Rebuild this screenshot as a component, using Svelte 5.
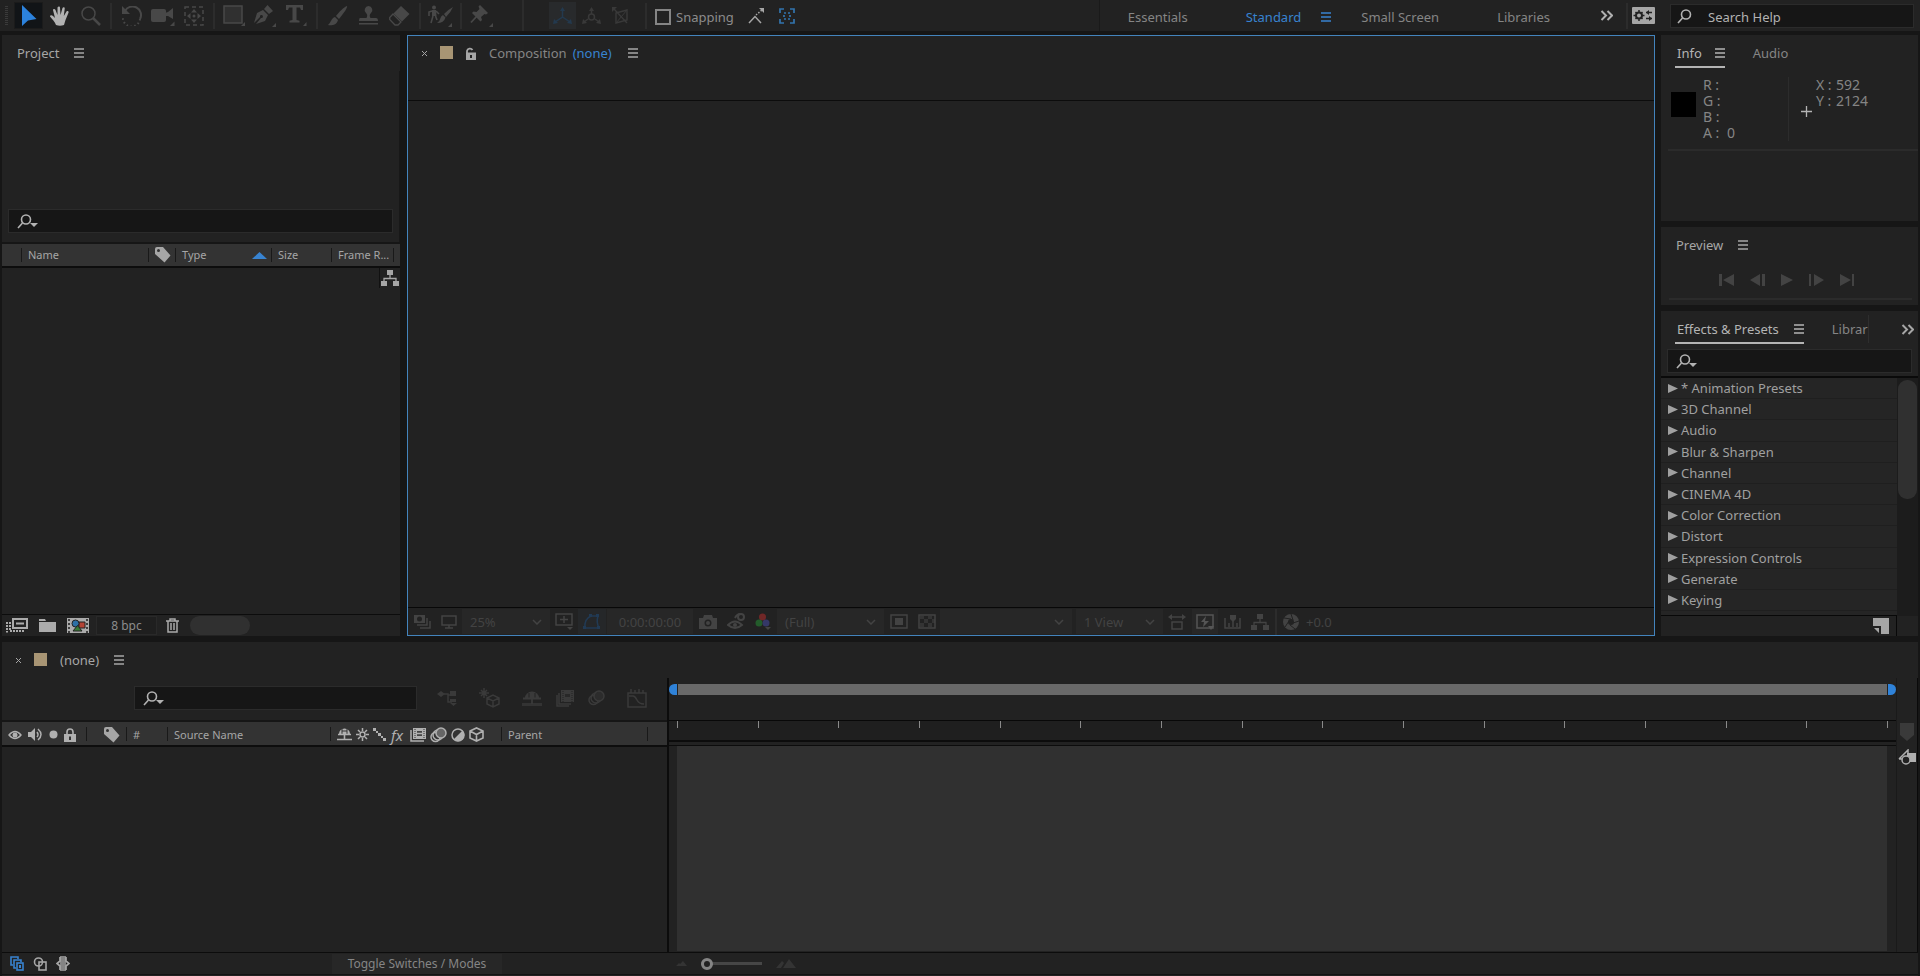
<script lang="ts">
	type Icon = [width: number, height: number, body: string];

	const line = 'fill="none" stroke="currentColor"';

	const icons: Record<string, Icon> = {
		select: [16, 22, `<path d="M1 0V21L7 15.500L15.500 14z"/>`],
		hand: [20, 20, `<path d="M6 19C5 16 2 13 0 10.500C0 9 2 9 3 10L5 12L3 4C3 2.500 5 2.500 5.500 4L7.500 9L7.500 1.500C8 0 10 0 10 1.500L10.500 9L12.500 2C13 1 15 1 14.700 2.800L13.800 10L16.500 5.500C17.500 4.500 19 5.500 18.500 6.800L15.500 14L14 19Q10 20.500 6 19z"/>`],
		zoom: [20, 20, `<g ${line}><circle cx="7.500" cy="7.500" r="6.500" stroke-width="1.500"/><path d="M12 12L19 19" stroke-width="2.500"/></g>`],
		rotate: [20, 20, `<g ${line} stroke-width="2"><path d="M3 5A8.500 8.500 0 0 1 18 13"/><path d="M18 13A8.500 8.500 0 0 1 1 11" stroke-dasharray="1.500 2.500"/></g><path d="M0 0V8H8z"/>`],
		camera: [24, 20, `<rect y="3" width="15" height="13" rx="2"/><path d="M14 7L17 6L22 2V13L17 10H14z"/><path d="M23.500 15.500V20H19z"/>`],
		anchor: [20, 20, `<rect x="1" y="1" width="18" height="18" ${line} stroke-width="1.500" stroke-dasharray="4 3"/><path d="M10 3L13 6.500H7zM10 17L7 13.500H13zM3 10L6.500 7V13zM17 10L13.500 13V7z"/><circle cx="10" cy="10" r="1.500"/>`],
		rect: [23, 21, `<rect x="1" y="1" width="18" height="17" fill="#303030" stroke="currentColor" stroke-width="1.500"/><path d="M22 17V21H18z"/>`],
		pen: [23, 22, `<path d="M0 18L3 8L9 5L14 10L11 16L2 19L7 13A1.500 1.500 0 1 0 6 12z"/><path d="M10 4L13.500 0L19 6L15 9z"/><path d="M22 18V22H18z"/>`],
		type: [21, 21, `<path d="M0 0H17V5H15L14 2.500H10.500V15L13.500 15.800V17.500H3.500V15.800L6.500 15V2.500H3L2 5H0z"/><path d="M20.500 17V21H17z"/>`],
		brush: [20, 20, `<path d="M8 10C11 6 16 1 19 0C20 1 16 7 11 13zM7 11L10 14C9 19 3 20 0 19C3 17 3 12 7 11z"/>`],
		stamp: [21, 19, `<path d="M10.500 0A4 4 0 0 0 8 7C10 9 9 11 8.500 12H2Q1 12 1 15H20Q20 12 18 12H12.500C12 11 11 9 13 7A4 4 0 0 0 10.500 0zM1 17H20V18.500H1z"/>`],
		eraser: [21, 20, `<path d="M12 0L20.500 8L13 15.500L4.500 7.500z"/><path d="M4 8L12 16L9 19H6L0.700 13.500V11.500z" ${line} stroke-width="1.300"/>`],
		roto: [25, 22, `<circle cx="6" cy="2.500" r="2"/><path d="M4 5H8L8.500 11H4z"/><path d="M4 6L1 7V11M8 6L11 9M5 11L3 18M7.500 11L9 15" ${line} stroke-width="1.600"/><path d="M16 9Q21 4 25 2Q23 7 18 12zM15 10L17.500 12.500Q16 18 9 18Q12 16 12.500 13Q13 11 15 10zM24 18V22H20z"/>`],
		pin: [24, 22, `<path d="M10 0L18 8L16 9.500L14.500 9L11 12L12 15L10.500 16.500L2 8L3.500 6.500L6.500 7L9.500 4L8.500 1.500z"/><path d="M7 11L1 17.500" ${line} stroke-width="1.800"/><path d="M23 18V22H19z"/>`],
		axis: [19, 18, `<path d="M9.500 2V10L2 15M9.500 10L17 15" ${line} stroke-width="1.500"/><path d="M9.500 0L12 4H7zM0 17L1 12L5 16zM19 17L18 12L14 16z"/>`],
		worldAxis: [19, 18, `<g ${line} stroke-width="1.500"><path d="M9.500 2V7M6 12L2 15M13 12L17 15"/><circle cx="9.500" cy="10" r="3"/></g><path d="M9.500 0L12 4H7zM0 17L1 12L5 16zM19 17L18 12L14 16z"/>`],
		viewAxis: [18, 18, `<path d="M2 2L15 16M4 6L15 3V13L4 16z" ${line} stroke-width="1.400"/><path d="M4 16L15 3" ${line}/><path d="M0 0H5L0 5z"/>`],
		snapEdge: [17, 18, `<g ${line} stroke-width="1.500"><path d="M1 16L7 9.500L13 16"/><path d="M8 8L14 3" stroke-dasharray="1.500 1.500"/></g><path d="M11 1H16V6z"/>`],
		snapBox: [16, 16, `<g ${line} stroke-width="1.700"><path d="M1 5V1H5M11 1H15V5M15 11V15H11M5 15H1V11"/><rect x="5" y="5" width="6" height="6" stroke-dasharray="2 2"/></g>`],
		settings: [23, 17, `<rect width="23" height="17" rx="1"/><circle cx="7" cy="8.500" r="3" fill="none" stroke="#222" stroke-width="2"/><path d="M7 3V5M7 12V14M1.500 8.500H4M10 8.500H12.500M3.500 5L5 6.500M10.500 5L9 6.500M3.500 12L5 10.500M10.500 12L9 10.500M14 5.500H20M14 11.500H20" stroke="#222" stroke-width="1.500"/><path d="M17 3V8L14 5.500zM17 9V14L20 11.500z" fill="#222"/>`],
		search: [15, 15, `<g ${line} stroke-width="1.600"><circle cx="9" cy="5.500" r="4.500"/><path d="M5.500 9L1 14"/></g>`],
		searchMenu: [21, 15, `<g ${line} stroke-width="1.600"><circle cx="9" cy="5.500" r="4.500"/><path d="M5.500 9L1 14"/></g><path d="M13 9H21L17 13z"/>`],
		more: [13, 11, `<path d="M1.500 1L6 5.500L1.500 10M7.500 1L12 5.500L7.500 10" ${line} stroke-width="2"/>`],
		burger: [10, 10, `<path d="M0 1H10M0 5H10M0 9H10" stroke="currentColor" stroke-width="1.400"/>`],
		close: [7, 7, `<path d="M1 1L6 6M6 1L1 6" ${line} stroke-width="1"/>`],
		unlock: [12, 13, `<path d="M2 6V4A3 3 0 0 1 7.500 3" ${line} stroke-width="1.800"/><path d="M1 5.500H11V13H1zM5 8V11H7V8z" fill-rule="evenodd"/>`],
		lock: [12, 14, `<path d="M3 7V4A3 3 0 0 1 9 4V7" ${line} stroke-width="1.600"/><path d="M0 6H12V14H0zM5 8.500V12H7V8.500z" fill-rule="evenodd"/>`],
		tag: [16, 16, `<path d="M0 2Q0 0 2 0H8L15.500 8.500L9.500 15.500L0 7zM2 3.500A1.500 1.500 0 1 0 5 3.500A1.500 1.500 0 1 0 2 3.500z" fill-rule="evenodd"/>`],
		sort: [15, 7, `<path d="M0 7L7.500 0L15 7z"/>`],
		flowchart: [18, 16, `<path d="M6 0H12V5H6zM0 11H6V16H0zM12 11H18V16H12z"/><path d="M9 5V8M3 11V8.500H15V11" ${line} stroke-width="1.300"/>`],
		interpret: [22, 15, `<path d="M6 0H22V11H6zM8 2V9H20V2zM10 4.500H18V6.500H10z" fill-rule="evenodd"/><path d="M4 4V13H18M1 4V14.500" ${line} stroke-width="2" stroke-dasharray="2 1"/>`],
		folder: [17, 13, `<path d="M0 0H6L7 2H0zM0 3H17V13H0z"/>`],
		newComp: [22, 15, `<rect width="22" height="15"/><path d="M2 1V15M20 1V15" stroke="#252525" stroke-width="1.600" stroke-dasharray="2 2"/><path d="M12 4H18V10H12z" fill="#b44436" stroke="#222"/><circle cx="8.500" cy="5.500" r="3.500" fill="#2d70a5" stroke="#222"/><path d="M6 13L10.500 7.500L15 13z" fill="#397a35" stroke="#222"/>`],
		trash: [13, 15, `<g ${line} stroke-width="1.500"><path d="M0 3H13M4 3V1H9V3M2 3V14H11V3M5 5V12M8 5V12"/></g>`],
		renders: [17, 14, `<path d="M0 0H11V8H0zM3 4A2.500 2.500 0 0 0 8 4A2.500 2.500 0 0 0 3 4z" fill-rule="evenodd"/><path d="M3 10H13V3M6 13H16V6" ${line} stroke-width="1.500"/>`],
		monitor: [16, 14, `<path d="M1 1H15V10H1zM8 10V13M4 13H12" ${line} stroke-width="1.500"/>`],
		chevron: [10, 6, `<path d="M1 1L5 5L9 1" ${line} stroke-width="1.500"/>`],
		grid: [18, 18, `<path d="M1 1H17V12H1zM9 3V10M5 6.500H13" ${line} stroke-width="1.500"/><path d="M12 14H18L15 17z"/>`],
		mask: [18, 15, `<path d="M2 14Q1 5 8 2H15Q13 8 16 14z" ${line} stroke-width="1.500"/><path d="M0 12H3V15H0zM14 12H17V15H14zM6 0H9V3H6zM13 0H16V3H13z"/>`],
		photo: [18, 14, `<path d="M5 0H13L14 3H18V14H0V3H4zM5.500 8A3.500 3.500 0 0 0 12.500 8A3.500 3.500 0 0 0 5.500 8z" fill-rule="evenodd"/><circle cx="9" cy="8" r="2"/>`],
		showPhoto: [18, 17, `<g ${line} stroke-width="2"><path d="M1 12Q8 5 15 12Q8 18 1 12z"/><circle cx="14" cy="4" r="3"/><path d="M8 5Q10 1 13 1"/></g><circle cx="8" cy="12" r="2"/>`],
		channels: [16, 18, `<circle cx="7.500" cy="4" r="3.500" fill="#702727"/><circle cx="4" cy="10" r="3.500" fill="#235c2b"/><circle cx="11" cy="10" r="3.500" fill="#353868"/><path d="M10 14H16L13 17z"/>`],
		region: [18, 15, `<rect x="1" y="1" width="16" height="13" ${line} stroke-width="1.500"/><path d="M5 4H13V11H5z"/>`],
		checker: [18, 15, `<rect x="1" y="1" width="16" height="13" ${line} stroke-width="1.500"/><path d="M2 2H6V5H10V2H14V5H17V9H14V5H10V9H14V13H10V9H6V13H2V9H6V5H2z" opacity=".55"/>`],
		aspect: [18, 16, `<path d="M2 3H16M4 8H14V15H4z" ${line} stroke-width="1.500"/><path d="M0 3L4 0V6zM18 3L14 0V6z"/>`],
		fast: [18, 16, `<rect x="1" y="1" width="16" height="13" ${line} stroke-width="1.500"/><path d="M10 2L5 8H8L7 13L13 7H9zM12 12H18L15 16z"/>`],
		timeline: [17, 14, `<path d="M1 3V13H16V3M5 8V12M9 6V12M13 8V12" ${line} stroke-width="1.500"/><path d="M6 0H12V4L9 7L6 4z"/>`],
		exposure: [16, 16, `<circle cx="8" cy="8" r="5.500" ${line} stroke-width="5"/><path d="M8 0L10 6M16 7L10 9M12 15L7 11M2 13L6 7M1 4L8 5" stroke="#222"/>`],
		miniFlow: [20, 16, `<path d="M4 4H11V12H15M11 5H15" ${line} stroke-width="1.500"/><path d="M0 4L4 1L8 4L4 7zM13 1H19V6H13zM13 9H19V12H13zM13 13H20L16.500 16z"/>`],
		draft: [21, 20, `<path d="M5 0V10M0 5H10M2 2L8 8M8 2L2 8M8 10L14 7L20 10V16L14 19L8 16zM8 10L14 13L20 10M14 13V19" ${line} stroke-width="1.500"/>`],
		shyAll: [20, 15, `<path d="M3 7A7 6.500 0 0 1 17 7z"/><path d="M7 2V7M13 2V7" stroke="#222"/><path d="M1 7.500H19M10 7V13" ${line} stroke-width="1.800"/><path d="M0 12H20V15H0z" opacity=".7"/>`],
		frames: [18, 17, `<path d="M5 0H18V12H5z"/><path d="M7 1V12M16 1V12" stroke="#222" stroke-dasharray="1 1"/><path d="M9 4H14V7H9z" fill="#282828"/><path d="M3 3V14H15M1 5V16H13" ${line} stroke-width="1.500"/>`],
		blur: [17, 16, `<g ${line} stroke-width="1.500"><circle cx="5.500" cy="10" r="4.500"/><circle cx="8" cy="8" r="5"/><circle cx="11" cy="6" r="5" fill="#666"/></g>`],
		blurAll: [17, 16, `<g ${line} stroke-width="1.500"><circle cx="5.500" cy="10" r="4.500"/><circle cx="8" cy="8" r="5"/><circle cx="11" cy="6" r="5" fill="#2c2c2c"/></g>`],
		graph: [20, 19, `<path d="M1 4H19V18H1zM4 0V4M8 1V4M12 0V4M16 1V4M2 7H6Q8 7 10 11Q12 15 17 15" ${line} stroke-width="1.500"/>`],
		eye: [14, 10, `<path d="M1 5Q7 -2 13 5Q7 12 1 5z" ${line} stroke-width="1.400"/><circle cx="7" cy="5" r="2.500"/>`],
		speaker: [15, 13, `<path d="M0 4H3L7 0V13L3 9H0z"/><path d="M9 4Q11 6.500 9 9M10 1Q16 6.500 10 12" ${line} stroke-width="1.500"/>`],
		dot: [9, 9, `<circle cx="4.500" cy="4.500" r="4"/>`],
		shy: [15, 14, `<path d="M2 6A5.500 5.500 0 0 1 13 6z"/><path d="M5 1V6M10 1V6M5 3H10" stroke="#333"/><path d="M1 6.500H14M7.500 6V11M0 11.500H5M10 11.500H15M5 11.500H10" ${line} stroke-width="1.600"/>`],
		sun: [13, 13, `<g ${line} stroke-width="1.500"><circle cx="6.500" cy="6.500" r="2.500"/><path d="M6.500 0V3M6.500 10V13M0 6.500H3M10 6.500H13M2 2L4 4M9 9L11 11M2 11L4 9M11 2L9 4"/></g>`],
		quality: [14, 14, `<path d="M0 0H3V3H0zM3 3H5V5H3zM5 5H8V8H5zM8 8H10V10H8zM10 10H13V13H10z"/>`],
		film: [16, 14, `<path d="M3 0H16V11H3z"/><path d="M5 1V11M14 1V11" stroke="#333" stroke-dasharray="1 1"/><path d="M7 3H12V8H7z" fill="#444"/><path d="M7 5.500H12M1 2V13H14" ${line} stroke-width="1.500"/>`],
		adjust: [14, 14, `<circle cx="7" cy="7" r="6" ${line} stroke-width="1.500"/><path d="M11.500 2.500A6.300 6.300 0 0 1 2.500 11.500z"/>`],
		cube: [15, 15, `<path d="M1 4L7.500 1L14 4V11L7.500 14L1 11zM1 4L7.500 7.500L14 4M7.500 7.500V14" ${line} stroke-width="1.600"/>`],
		first: [15, 12, `<path d="M0 0H3V12H0zM15 0V12L4 6z"/>`],
		stepBack: [15, 12, `<path d="M10 0V12L0 6zM12 0H15V12H12z"/>`],
		play: [12, 12, `<path d="M0 0L12 6L0 12z"/>`],
		stepForward: [15, 12, `<path d="M0 0H2V12H0zM5 0L15 6L5 12z"/>`],
		last: [15, 12, `<path d="M0 0L11 6L0 12zM12 0H14V12H12z"/>`],
		cross: [11, 11, `<path d="M5.500 0V11M0 5.500H11" ${line} stroke-width="1.300"/>`],
		disclose: [10, 9, `<path d="M0 0L10 4.500L0 9z"/>`],
		newSheet: [16, 16, `<path d="M0 0H16V16H8V8H0zM1 10H6V15z"/>`],
		marker: [14, 18, `<path d="M0 0H14V12L7 18L0 12z"/>`],
		compButton: [18, 16, `<path d="M9 4H18V13H9z"/><path d="M1 10L10 1V5M1 10H5" ${line} stroke-width="1.500"/><circle cx="8" cy="11" r="4" fill="#222" stroke="currentColor" stroke-width="1.500"/>`],
		layers: [15, 15, `<g ${line} stroke-width="1.600"><path d="M3 9H1V1H8V3M6 12H4V4H11V6"/><rect x="7" y="7" width="6" height="7"/></g><path d="M9 9H11V12H9z"/>`],
		modes: [15, 14, `<g ${line} stroke-width="1.600"><circle cx="5.500" cy="5" r="4"/><rect x="6" y="5" width="7" height="8"/></g>`],
		stretch: [14, 15, `<path d="M4 0H10V15H4z" opacity=".75"/><path d="M4 1V5L1 7.500L4 10V14M10 1V5L13 7.500L10 10V14" ${line} stroke-width="1.700"/>`],
		zoomOut: [11, 5, `<path d="M0 5L3 2L4 3L7 0L11 5z"/>`],
		zoomIn: [20, 9, `<path d="M0 9L6 2L8 4L5 9zM7 9L13 0L20 9z"/>`],
	};

	const toolGroups = [
		["select", "hand", "zoom"],
		["rotate", "camera", "anchor"],
		["rect", "pen", "type"],
		["brush", "stamp", "eraser"],
		["roto"],
		["pin"],
	];

	const presets = [
		"* Animation Presets",
		"3D Channel",
		"Audio",
		"Blur & Sharpen",
		"Channel",
		"CINEMA 4D",
		"Color Correction",
		"Distort",
		"Expression Controls",
		"Generate",
		"Keying",
	];

	const ticks = Array.from({ length: 16 }, (_, i) => i);

	let activeTool = $state("select");
	let snapping = $state(false);
	let timelineZoom = $state(0);
</script>

{#snippet icon(name: string)}
	{@const [width, height, body] = icons[name]}
	<svg class="icon" {width} {height} viewBox="0 0 {width} {height}" fill="currentColor" aria-hidden="true">
		{@html body}
	</svg>
{/snippet}

{#snippet iconButton(name: string)}
	<button class="icon-btn" aria-label={name}>{@render icon(name)}</button>
{/snippet}

{#snippet searchBox(label: string)}
	<label class="search">
		{@render icon("searchMenu")}
		<input type="text" aria-label={label} />
	</label>
{/snippet}

<div class="app">
	<header class="toolbar">
		<span class="grip"></span>
		{#each toolGroups as group, i}
			{#if i > 0}<span class="sep"></span>{/if}
			{#each group as tool}
				<button
					class="tool"
					class:active={activeTool === tool}
					class:bright={tool === "hand"}
					aria-label={tool}
					onclick={() => (activeTool = tool)}
				>{@render icon(tool)}</button>
			{/each}
		{/each}
		<span class="sep wide"></span>
		<div class="axes">
			<button class="tool axis-on" aria-label="Local axis">{@render icon("axis")}</button>
			<button class="tool faint" aria-label="World axis">{@render icon("worldAxis")}</button>
			<button class="tool faint" aria-label="View axis">{@render icon("viewAxis")}</button>
		</div>
		<span class="sep"></span>
		<label class="snapping">
			<input type="checkbox" bind:checked={snapping} />
			Snapping
		</label>
		<button class="icon-btn" aria-label="Snap to edges">{@render icon("snapEdge")}</button>
		<button class="icon-btn snap-box" aria-label="Snap to features">{@render icon("snapBox")}</button>

		<nav class="workspaces">
			<button>Essentials</button>
			<button class="current">Standard {@render icon("burger")}</button>
			<button>Small Screen</button>
			<button>Libraries</button>
		</nav>
		<button class="icon-btn more-spaces" aria-label="More workspaces">{@render icon("more")}</button>
		<span class="sep"></span>
		<button class="icon-btn" aria-label="Workspace settings">{@render icon("settings")}</button>
		<label class="search help">
			{@render icon("search")}
			<input type="text" placeholder="Search Help" aria-label="Search Help" />
		</label>
	</header>

	<main class="upper">
		<section class="panel project">
			<div class="tabs">
				<h2>Project</h2>
				{@render iconButton("burger")}
			</div>
			<div class="project-info"></div>
			<div class="project-search">{@render searchBox("Search project")}</div>
			<table class="columns">
				<colgroup>
					<col class="w-label" /><col class="w-name" /><col class="w-tag" /><col class="w-type" /><col class="w-size" /><col class="w-rate" /><col />
				</colgroup>
				<thead>
					<tr>
						<th></th>
						<th>Name</th>
						<th>{@render icon("tag")}</th>
						<th><span class="sorted">Type <span class="blue">{@render icon("sort")}</span></span></th>
						<th>Size</th>
						<th>Frame R...</th>
						<th></th>
					</tr>
				</thead>
			</table>
			<div class="project-items">
				<div class="flow-btn">{@render iconButton("flowchart")}</div>
			</div>
			<footer class="project-footer">
				{@render iconButton("interpret")}
				{@render iconButton("folder")}
				{@render iconButton("newComp")}
				<button class="bpc">8 bpc</button>
				{@render iconButton("trash")}
				<span class="h-thumb"></span>
			</footer>
		</section>

		<section class="panel composition">
			<div class="tabs comp-tabs">
				{@render iconButton("close")}
				<span class="swatch"></span>
				{@render iconButton("unlock")}
				<h2 class="dim">Composition <span class="blue">(none)</span></h2>
				{@render iconButton("burger")}
			</div>
			<div class="viewer"></div>
			<footer class="comp-footer">
				{@render iconButton("renders")}
				{@render iconButton("monitor")}
				<label class="select mag">
					<select aria-label="Magnification"><option>25%</option></select>
					{@render icon("chevron")}
				</label>
				{@render iconButton("grid")}
				<button class="icon-btn mask-btn" aria-label="Toggle mask">{@render icon("mask")}</button>
				<button class="timecode">0:00:00:00</button>
				{@render iconButton("photo")}
				{@render iconButton("showPhoto")}
				{@render iconButton("channels")}
				<label class="select resolution">
					<select aria-label="Resolution"><option>(Full)</option></select>
					{@render icon("chevron")}
				</label>
				{@render iconButton("region")}
				{@render iconButton("checker")}
				<label class="select camera">
					<select aria-label="3D view"><option></option></select>
					{@render icon("chevron")}
				</label>
				<label class="select views">
					<select aria-label="View layout"><option>1 View</option></select>
					{@render icon("chevron")}
				</label>
				{@render iconButton("aspect")}
				<button class="icon-btn fast-btn" aria-label="Fast previews">{@render icon("fast")}</button>
				{@render iconButton("timeline")}
				{@render iconButton("flowchart")}
				<span class="sep"></span>
				{@render iconButton("exposure")}
				<button class="exposure">+0.0</button>
			</footer>
		</section>

		<aside class="side">
			<section class="panel info">
				<div class="tabs">
					<h2 class="tab-on">Info {@render icon("burger")}</h2>
					<h2 class="dim">Audio</h2>
				</div>
				<div class="readout">
					<span class="colour"></span>
					<dl class="rgba">
						<dt>R :</dt><dd></dd>
						<dt>G :</dt><dd></dd>
						<dt>B :</dt><dd></dd>
						<dt>A :</dt><dd>0</dd>
					</dl>
					<span class="cursor">{@render icon("cross")}</span>
					<dl class="xy">
						<dt>X :</dt><dd>592</dd>
						<dt>Y :</dt><dd>2124</dd>
					</dl>
				</div>
			</section>

			<section class="panel preview">
				<div class="tabs">
					<h2>Preview</h2>
					{@render iconButton("burger")}
				</div>
				<div class="transport">
					{#each ["first", "stepBack", "play", "stepForward", "last"] as name}
						{@render iconButton(name)}
					{/each}
				</div>
			</section>

			<section class="panel effects">
				<div class="tabs">
					<h2 class="tab-on">Effects & Presets {@render icon("burger")}</h2>
					<h2 class="dim next-tab">Librar</h2>
					<button class="icon-btn more-tabs" aria-label="More panels">{@render icon("more")}</button>
				</div>
				<div class="effects-search">{@render searchBox("Search effects")}</div>
				<div class="effects-body">
					<ul class="presets">
						{#each presets as preset}
							<li><button>{@render icon("disclose")}{preset}</button></li>
						{/each}
					</ul>
					<div class="v-track"><span class="v-thumb"></span></div>
				</div>
				<footer class="effects-footer">{@render iconButton("newSheet")}</footer>
			</section>
		</aside>
	</main>

	<section class="panel timeline">
		<div class="tabs timeline-tabs">
			{@render iconButton("close")}
			<span class="swatch"></span>
			<h2>(none)</h2>
			{@render iconButton("burger")}
		</div>
		<div class="timeline-body">
			<div class="layers">
				<div class="layer-tools">
					{@render searchBox("Search layers")}
					{#each ["miniFlow", "draft", "shyAll", "frames", "blurAll", "graph"] as name}
						{@render iconButton(name)}
					{/each}
				</div>
				<table class="columns">
					<colgroup>
						<col class="w-av" /><col class="w-colour" /><col class="w-number" /><col class="w-source" /><col class="w-switches" /><col class="w-parent" /><col />
					</colgroup>
					<thead>
						<tr>
							<th>
								<span class="av">
									{#each ["eye", "speaker", "dot", "lock"] as name}{@render icon(name)}{/each}
								</span>
							</th>
							<th class="tag-cell">{@render icon("tag")}</th>
							<th>#</th>
							<th>Source Name</th>
							<th>
								<span class="switches">
									{#each ["shy", "sun", "quality"] as name}{@render icon(name)}{/each}
									<i>fx</i>
									{#each ["film", "blur", "adjust", "cube"] as name}{@render icon(name)}{/each}
								</span>
							</th>
							<th>Parent</th>
							<th></th>
						</tr>
					</thead>
				</table>
				<div class="layer-list"></div>
			</div>
			<div class="track">
				<div class="work-area">
					<span class="handle start"></span>
					<span class="work-bar"></span>
					<span class="handle end"></span>
				</div>
				<div class="ruler">
					{#each ticks as tick (tick)}<span class="tick"></span>{/each}
				</div>
				<div class="lanes"><div class="lane-area"></div></div>
			</div>
			<div class="track-side">
				<button class="icon-btn marker" aria-label="Marker">{@render icon("marker")}</button>
				{@render iconButton("compButton")}
			</div>
		</div>
		<footer class="timeline-footer">
			<div class="panes">
				<button class="icon-btn blue" aria-label="Layer switches">{@render icon("layers")}</button>
				{@render iconButton("modes")}
				{@render iconButton("stretch")}
			</div>
			<button class="toggle">Toggle Switches / Modes</button>
			<div class="zoom-control">
				{@render icon("zoomOut")}
				<input type="range" min="0" max="100" aria-label="Timeline zoom" bind:value={timelineZoom} />
				{@render icon("zoomIn")}
			</div>
		</footer>
	</section>
</div>

<style>
	:global(body) {
		margin: 0;
		background: #161616;
	}

	.app {
		display: flex;
		flex-direction: column;
		box-sizing: border-box;
		min-height: 100vh;
		background: #161616;
		color: #a6a6a6;
		font-family: "Noto Sans", sans-serif;
		font-size: 13px;
		line-height: 18px;
	}

	.app * {
		box-sizing: border-box;
	}

	button,
	input,
	select {
		margin: 0;
		padding: 0;
		border: none;
		background: transparent;
		color: inherit;
		font: inherit;
	}

	h2 {
		display: flex;
		align-items: center;
		margin: 0;
		font-size: 13px;
		font-weight: 400;
	}

	.icon {
		display: block;
		flex-shrink: 0;
	}

	.icon-btn {
		display: flex;
		align-items: center;
		justify-content: center;
		flex-shrink: 0;
	}

	.blue {
		color: #3883d0;
	}

	.dim {
		color: #858585;
	}

	.panel {
		display: flex;
		flex-direction: column;
		background: #222;
		min-width: 0;
	}

	.sep {
		width: 2px;
		height: 26px;
		margin: 0 4px;
		background: #2c2c2c;
		flex-shrink: 0;
	}

	/* toolbar */
	.toolbar {
		display: flex;
		align-items: center;
		height: 31px;
		margin-bottom: 4px;
		padding: 0 6px 0 5px;
		background: #222;
	}

	.grip {
		width: 3px;
		height: 20px;
		margin-right: 5px;
		background: repeating-linear-gradient(#3a3a3a 0 1px, transparent 1px 2px);
	}

	.tool {
		display: flex;
		align-items: center;
		justify-content: center;
		width: 29px;
		height: 27px;
		margin: 0 1px;
		color: #484848;
		flex-shrink: 0;
	}

	.tool.bright {
		color: #b2b2b2;
	}

	.tool.active {
		border: 1px solid #1b1b1b;
		background: #111417;
		color: #2c82dc;
	}

	.tool.faint {
		color: #393939;
	}

	.axis-on {
		background: #282a2c;
		color: #23394e;
	}

	.sep.wide {
		margin-left: 25px;
		height: 31px;
	}

	.axes {
		display: flex;
		margin: 0 6px 0 20px;
	}

	.axes .tool {
		width: 27px;
	}

	.snapping {
		display: flex;
		align-items: center;
		gap: 5px;
		margin: 0 14px 0 4px;
		padding-top: 2px;
		color: #8c8c8c;
	}

	.snapping input {
		appearance: none;
		width: 16px;
		height: 16px;
		border: 2px solid #858585;
	}

	.snapping input:checked {
		background: #3883d0;
	}

	.snap-box {
		margin-left: 14px;
		color: #3274ae;
	}

	.workspaces {
		display: flex;
		align-self: stretch;
		margin: 0 50px 0 auto;
		padding: 3px 0 0 28px;
		gap: 58px;
		border-left: 1px solid #1a1a1a;
		color: #858585;
	}

	.workspaces button {
		display: flex;
		align-items: center;
		gap: 20px;
	}

	.workspaces .current {
		color: #3883d0;
		margin-right: -28px;
	}

	.more-spaces {
		margin-right: 9px;
		color: #b0b0b0;
	}

	.search {
		display: flex;
		align-items: center;
		gap: 16px;
		height: 24px;
		padding: 0 8px;
		border: 1px solid #2b2b2b;
		background: #161616;
		color: #b2b2b2;
	}

	.search input {
		flex: 1;
		min-width: 0;
		outline: none;
	}

	.search input::placeholder {
		color: #b2b2b2;
		opacity: 1;
	}

	.help {
		width: 244px;
		margin-left: 15px;
		padding: 2px 6px 0;
	}

	/* upper row */
	.upper {
		display: grid;
		grid-template-columns: 398px minmax(0, 1fr) 257px;
		gap: 6px;
		flex: 1;
		padding: 0 2px;
	}

	.tabs {
		display: flex;
		align-items: center;
		height: 36px;
		padding-left: 15px;
		gap: 15px;
		flex-shrink: 0;
	}

	/* project */
	.project-info {
		height: 138px;
		border-right: 1px solid #181818;
	}

	.project-search {
		padding: 0 6px 9px;
		border-right: 1px solid #181818;
	}

	.columns {
		width: 100%;
		height: 26px;
		table-layout: fixed;
		border-collapse: collapse;
		border-top: 2px solid #161616;
		border-bottom: 2px solid #0d0d0d;
		background: #333;
		font-size: 11px;
		line-height: 14px;
	}

	.columns th {
		height: 22px;
		padding: 0 0 0 6px;
		background: linear-gradient(#191919, #191919) right center / 1px 14px no-repeat;
		font-weight: 400;
		text-align: left;
		white-space: nowrap;
	}

	.columns th:last-child {
		background: none;
	}

	.w-label { width: 20px; }
	.w-name { width: 127px; }
	.w-tag { width: 27px; }
	.w-type { width: 96px; }
	.w-size { width: 60px; }
	.w-rate { width: 62px; }

	.sorted {
		display: flex;
		align-items: center;
		justify-content: space-between;
		padding-right: 5px;
	}

	.project-items {
		display: flex;
		justify-content: flex-end;
		align-items: flex-start;
		flex: 1;
	}

	.flow-btn {
		padding: 2px 1px;
		border-left: 1px solid #111;
	}

	.project-footer {
		display: flex;
		align-items: center;
		height: 22px;
		padding-left: 4px;
		gap: 11px;
		border-top: 1px solid #0c0c0c;
		color: #ababab;
	}

	.bpc {
		width: 61px;
		height: 19px;
		margin: 0 -2px 0 -4px;
		border: 1px solid #292929;
		background: #1f1f1f;
		color: #8c8c8c;
		font-size: 12px;
		line-height: 16px;
	}

	.h-thumb {
		width: 60px;
		height: 19px;
		border-radius: 10px;
		background: #303030;
	}

	/* composition */
	.composition {
		margin-left: 1px;
		border: 1px solid #4384bd;
	}

	.comp-tabs {
		height: 34px;
		padding-left: 13px;
		gap: 12px;
	}

	.comp-tabs h2 {
		gap: 6px;
	}

	.comp-tabs h2 + .icon-btn {
		margin-left: 4px;
	}

	.swatch {
		width: 13px;
		height: 13px;
		margin-bottom: 2px;
		background: #a89574;
	}

	.viewer {
		flex: 1;
		margin-top: 30px;
		border-top: 1px solid #0c0c0c;
	}

	.comp-footer {
		display: flex;
		align-items: center;
		height: 28px;
		padding: 1px 6px;
		gap: 10px;
		border-top: 1px solid #080808;
		color: #434343;
		overflow: hidden;
	}

	.select {
		display: flex;
		align-items: center;
		height: 25px;
		padding: 0 8px;
		background: #272727;
	}

	.select select {
		appearance: none;
		flex: 1;
		min-width: 0;
		outline: none;
	}

	.mag {
		width: 88px;
		margin: 0 -5px;
	}

	.mask-btn {
		width: 28px;
		height: 25px;
		margin: 0 -5px;
		background: #252729;
		color: #213a54;
	}

	.timecode {
		width: 86px;
		height: 25px;
		margin: 0 -4px;
		background: #272727;
	}

	.resolution {
		width: 107px;
		margin: 0 -4px;
	}

	.camera {
		width: 132px;
		margin: 0 -6px;
	}

	.views {
		width: 87px;
		margin-right: -5px;
	}

	.fast-btn {
		width: 26px;
		height: 25px;
		margin: 0 -4px;
		background: #272727;
		color: #555;
	}

	.comp-footer .sep {
		margin: 0 -4px;
	}

	.exposure {
		margin-left: -3px;
	}

	/* right column */
	.side {
		display: flex;
		flex-direction: column;
		gap: 6px;
		min-width: 0;
	}

	.tab-on {
		gap: 13px;
		height: 28px;
		margin: 2px 0 0 -1px;
		padding: 0 0 0 2px;
		border-bottom: 2px solid #b4b4b4;
		color: #b4b4b4;
	}

	.info {
		height: 186px;
	}

	.info .tabs {
		gap: 28px;
	}

	.readout {
		display: flex;
		align-items: flex-start;
		height: 80px;
		margin-left: 7px;
		padding: 6px 0 0 3px;
		border-bottom: 2px solid #2b2b2b;
		color: #858585;
		font-size: 14px;
		line-height: 16px;
	}

	.colour {
		width: 25px;
		height: 25px;
		margin: 15px 7px 0 0;
		background: #000;
	}

	dl {
		display: grid;
		grid-template-columns: 24px 1fr;
		grid-auto-rows: 16px;
		margin: 0;
	}

	dd {
		margin: 0;
	}

	.rgba {
		width: 86px;
		border-right: 1px solid #2c2c2c;
	}

	.xy {
		grid-template-columns: 20px 1fr;
	}

	.cursor {
		margin: 29px 4px 0 12px;
		color: #b4b4b4;
	}

	.preview {
		height: 78px;
	}

	.transport {
		display: flex;
		align-items: flex-end;
		height: 37px;
		margin: 0 6px 0 8px;
		padding: 0 0 12px 50px;
		gap: 16px;
		border-bottom: 2px solid #2b2b2b;
		color: #434343;
	}

	.effects {
		flex: 1;
	}

	.effects .tabs {
		gap: 28px;
	}

	.next-tab {
		height: 28px;
		border-right: 1px solid #2e2e2e;
	}

	.effects .tabs .tab-on {
		gap: 15px;
	}

	.more-tabs {
		margin: 0 4px 0 auto;
	}

	.effects-search {
		padding: 2px 6px 3px;
	}

	.effects-body {
		display: flex;
		flex: 1;
		border-top: 2px solid #0a0a0a;
	}

	.presets {
		display: flex;
		flex-direction: column;
		flex: 1;
		margin: 0;
		padding: 0 0 4px;
		list-style: none;
		border-bottom: 1px solid #080808;
		background: #252525;
	}

	.presets li {
		display: flex;
		flex: 1;
		min-height: 21px;
		border-bottom: 1px solid #1f1f1f;
	}

	.presets button {
		display: flex;
		align-items: center;
		width: 100%;
		padding-left: 7px;
		gap: 3px;
		color: #a0a0a0;
	}

	.v-track {
		width: 21px;
		padding: 2px 1px;
		background: #1c1c1c;
	}

	.v-thumb {
		display: block;
		height: 51%;
		border-radius: 9px;
		background: #303030;
	}

	.effects-footer {
		display: flex;
		justify-content: flex-end;
		height: 20px;
		margin-right: 21px;
		padding-right: 7px;
		border-right: 1px solid #080808;
	}

	/* timeline */
	.timeline {
		height: 334px;
		margin: 6px 2px 0;
	}

	.timeline-tabs {
		padding-left: 13px;
		gap: 12px;
	}

	.timeline-tabs h2 {
		margin: 0 3px 0 1px;
	}

	.timeline-body {
		display: flex;
		flex: 1;
		border-bottom: 1px solid #0c0c0c;
	}

	.layers {
		display: flex;
		flex-direction: column;
		width: 667px;
		border-right: 2px solid #0c0c0c;
	}

	.layer-tools {
		display: flex;
		align-items: center;
		height: 42px;
		padding: 0 20px 2px 132px;
		gap: 14px;
		color: #3a3a3a;
	}

	.layer-tools .search {
		flex: 1;
		margin-right: 6px;
	}

	.layer-tools .icon-btn:nth-of-type(2),
	.layer-tools .icon-btn:nth-of-type(3),
	.layer-tools .icon-btn:last-child {
		margin-left: 8px;
	}

	.layers .columns {
		height: 27px;
	}

	.layers .columns th {
		height: 23px;
		padding-top: 2px;
	}

	.w-av { width: 85px; }
	.w-colour { width: 40px; }
	.w-number { width: 41px; }
	.w-source { width: 163px; }
	.w-switches { width: 171px; }
	.w-parent { width: 146px; }

	.av,
	.switches {
		display: flex;
		align-items: center;
		gap: 6px;
		color: #b0b0b0;
	}

	.switches {
		gap: 4px;
	}

	.switches i {
		width: 15px;
		font-size: 15px;
	}

	.layers .columns .tag-cell {
		padding-left: 17px;
	}

	.track {
		flex: 1;
		display: flex;
		flex-direction: column;
		min-width: 0;
		border-right: 1px solid #1a1a1a;
	}

	.work-area {
		display: flex;
		height: 42px;
		padding-top: 6px;
	}

	.handle {
		width: 8px;
		height: 11px;
		background: #2f82d8;
	}

	.start {
		margin-right: 1px;
		border-radius: 6px 0 0 6px;
	}

	.end {
		margin-left: 1px;
		border-radius: 0 6px 6px 0;
	}

	.work-bar {
		flex: 1;
		height: 11px;
		background: #696969;
	}

	.ruler {
		display: flex;
		justify-content: space-between;
		height: 22px;
		padding: 0 8px;
		border-top: 1px solid #080808;
		border-bottom: 2px solid #0c0c0c;
		background: #1f1f1f;
	}

	.tick {
		width: 1px;
		height: 7px;
		background: #8a8a8a;
	}

	.lanes {
		flex: 1;
		display: flex;
		margin-top: 3px;
		padding: 0 9px 1px 8px;
		border-top: 1px solid #0c0c0c;
	}

	.lane-area {
		flex: 1;
		background: #303030;
	}

	.track-side {
		display: flex;
		flex-direction: column;
		align-items: center;
		width: 21px;
		padding-top: 45px;
		gap: 8px;
		border-right: 1px solid #0a0a0a;
		color: #b0b0b0;
	}

	.marker {
		color: #3a3a3a;
	}

	.timeline-footer {
		display: flex;
		align-items: center;
		height: 22px;
		margin-bottom: 1px;
		padding-left: 8px;
		border-bottom: 1px solid #141414;
	}

	.panes {
		display: flex;
		gap: 8px;
		width: 322px;
	}

	.toggle {
		width: 170px;
		height: 20px;
		background: #272727;
		color: #858585;
		font-size: 12px;
		line-height: 20px;
	}

	.zoom-control {
		display: flex;
		align-items: center;
		gap: 14px;
		margin-left: 174px;
		color: #343434;
	}

	.zoom-control input {
		appearance: none;
		width: 61px;
		height: 12px;
		background: linear-gradient(#464646, #464646) center / 100% 3px no-repeat;
	}

	.zoom-control input::-webkit-slider-thumb {
		appearance: none;
		width: 12px;
		height: 12px;
		border: 3px solid #858585;
		border-radius: 50%;
		background: #222;
	}
</style>
